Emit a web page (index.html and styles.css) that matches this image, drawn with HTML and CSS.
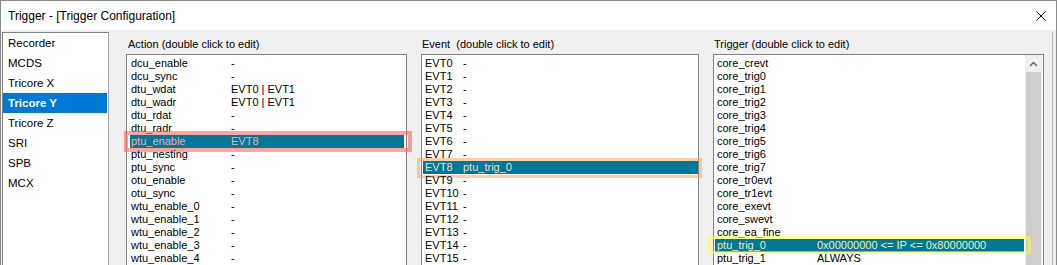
FILE: index.html
```html
<!DOCTYPE html>
<html lang="en">
<head>
  <meta charset="UTF-8">
  <title>Trigger - [Trigger Configuration]</title>
  <link rel="stylesheet" href="styles.css">
</head>
<body>
  <div class="window">
    <div class="titlebar">
      <span class="title">Trigger - [Trigger Configuration]</span>
      <svg class="close" width="10" height="10" viewBox="0 0 10 10">
        <path d="M0.5 0.5 L9.5 9.5 M9.5 0.5 L0.5 9.5" stroke="#000" stroke-width="1" fill="none"/>
      </svg>
    </div>

    <div class="client">
      <!-- core selector -->
      <div class="cores">
        <div class="core">Recorder</div>
        <div class="core">MCDS</div>
        <div class="core">Tricore X</div>
        <div class="core selected">Tricore Y</div>
        <div class="core">Tricore Z</div>
        <div class="core">SRI</div>
        <div class="core">SPB</div>
        <div class="core">MCX</div>
      </div>

      <!-- action -->
      <div class="panel action">
        <div class="label">Action (double click to edit)</div>
        <div class="box">
          <div class="rows">
            <div class="row"><span class="name">dcu_enable</span><span>-</span></div>
            <div class="row"><span class="name">dcu_sync</span><span>-</span></div>
            <div class="row"><span class="name">dtu_wdat</span><span>EVT0 | EVT1</span></div>
            <div class="row"><span class="name">dtu_wadr</span><span>EVT0 | EVT1</span></div>
            <div class="row"><span class="name">dtu_rdat</span><span>-</span></div>
            <div class="row"><span class="name">dtu_radr</span><span>-</span></div>
            <div class="row sel pink"><span class="name">ptu_enable</span><span>EVT8</span></div>
            <div class="row"><span class="name">ptu_nesting</span><span>-</span></div>
            <div class="row"><span class="name">ptu_sync</span><span>-</span></div>
            <div class="row"><span class="name">otu_enable</span><span>-</span></div>
            <div class="row"><span class="name">otu_sync</span><span>-</span></div>
            <div class="row"><span class="name">wtu_enable_0</span><span>-</span></div>
            <div class="row"><span class="name">wtu_enable_1</span><span>-</span></div>
            <div class="row"><span class="name">wtu_enable_2</span><span>-</span></div>
            <div class="row"><span class="name">wtu_enable_3</span><span>-</span></div>
            <div class="row"><span class="name">wtu_enable_4</span><span>-</span></div>
          </div>
        </div>
      </div>

      <!-- event -->
      <div class="panel event">
        <div class="label">Event  (double click to edit)</div>
        <div class="box">
          <div class="rows">
            <div class="row"><span class="name">EVT0</span><span>-</span></div>
            <div class="row"><span class="name">EVT1</span><span>-</span></div>
            <div class="row"><span class="name">EVT2</span><span>-</span></div>
            <div class="row"><span class="name">EVT3</span><span>-</span></div>
            <div class="row"><span class="name">EVT4</span><span>-</span></div>
            <div class="row"><span class="name">EVT5</span><span>-</span></div>
            <div class="row"><span class="name">EVT6</span><span>-</span></div>
            <div class="row"><span class="name">EVT7</span><span>-</span></div>
            <div class="row sel orange"><span class="name">EVT8</span><span>ptu_trig_0</span></div>
            <div class="row"><span class="name">EVT9</span><span>-</span></div>
            <div class="row"><span class="name">EVT10</span><span>-</span></div>
            <div class="row"><span class="name">EVT11</span><span>-</span></div>
            <div class="row"><span class="name">EVT12</span><span>-</span></div>
            <div class="row"><span class="name">EVT13</span><span>-</span></div>
            <div class="row"><span class="name">EVT14</span><span>-</span></div>
            <div class="row"><span class="name">EVT15</span><span>-</span></div>
          </div>
        </div>
      </div>

      <!-- trigger -->
      <div class="panel trigger">
        <div class="label">Trigger (double click to edit)</div>
        <div class="box">
          <div class="rows">
            <div class="row"><span class="name">core_crevt</span><span></span></div>
            <div class="row"><span class="name">core_trig0</span><span></span></div>
            <div class="row"><span class="name">core_trig1</span><span></span></div>
            <div class="row"><span class="name">core_trig2</span><span></span></div>
            <div class="row"><span class="name">core_trig3</span><span></span></div>
            <div class="row"><span class="name">core_trig4</span><span></span></div>
            <div class="row"><span class="name">core_trig5</span><span></span></div>
            <div class="row"><span class="name">core_trig6</span><span></span></div>
            <div class="row"><span class="name">core_trig7</span><span></span></div>
            <div class="row"><span class="name">core_tr0evt</span><span></span></div>
            <div class="row"><span class="name">core_tr1evt</span><span></span></div>
            <div class="row"><span class="name">core_exevt</span><span></span></div>
            <div class="row"><span class="name">core_swevt</span><span></span></div>
            <div class="row"><span class="name">core_ea_fine</span><span></span></div>
            <div class="row sel yellow"><span class="name">ptu_trig_0</span><span>0x00000000 &lt;= IP &lt;= 0x80000000</span></div>
            <div class="row"><span class="name">ptu_trig_1</span><span>ALWAYS</span></div>
          </div>
          <div class="scrollbar">
            <div class="arrow">
              <svg width="9" height="6" viewBox="0 0 9 6">
                <path d="M1 5 L4.5 1.5 L8 5" stroke="#606060" stroke-width="1.3" fill="none"/>
              </svg>
            </div>
            <div class="thumb"></div>
          </div>
        </div>
      </div>

      <div class="edge"></div>
    </div>
  </div>
</body>
</html>
```

FILE: styles.css
```css
body {
  margin: 0;
  overflow: hidden;
  font-family: "Liberation Sans", Arial, sans-serif;
  color: #000;
}

.window {
  width: 1055px;
  height: 264px;
  border: 1px solid #8a8a8a;
  border-bottom: none;
  background: #f0f0f0;
  overflow: hidden;
}

/* title */
.titlebar {
  height: 29px;
  background: #fff;
  display: flex;
  align-items: center;
  justify-content: space-between;
  padding: 0 10px 0 7px;
}

.title {
  font-size: 12px;
}

.close {
  margin-top: 1px;
}

/* client area */
.client {
  display: flex;
  align-items: flex-start;
  padding: 2px 0 0 1px;
}

.cores {
  width: 104px;
  height: 240px;
  background: #fff;
  border: 1px solid #828282;
  border-right-color: #a8a8a8;
  padding: 0 1px 0 0;
  font-size: 11.5px;
}

.core {
  height: 20px;
  line-height: 20px;
  padding-left: 5px;
}

.core.selected {
  background: #0078d7;
  color: #fff;
  font-weight: bold;
}

.panel {
  font-size: 11px;
}

.action { margin-left: 17px; width: 281px; }
.event { margin-left: 14px; width: 278px; }
.trigger { margin-left: 14px; width: 331px; }

.label {
  height: 16px;
  padding-top: 6px;
  padding-left: 1px;
  white-space: pre;
}

.action .label { padding-left: 2px; }

.box {
  height: 220px;
  background: #fff;
  border: 1px solid #828282;
  display: flex;
}

.rows {
  flex: 1;
  padding: 2px 2px 0 3px;
}

.event .rows { padding-left: 1px; padding-right: 0; }
.trigger .rows { padding-left: 1px; padding-right: 1px; }

.row {
  position: relative;
  display: flex;
  height: 13px;
  line-height: 13px;
  padding-left: 1px;
  white-space: pre;
}

.action .name, .trigger .name { width: 100px; }
.event .name { width: 38px; }
.event .row { padding-left: 2px; }
.trigger .row { padding-left: 2px; }

.row.sel {
  background: #00789a;
}

.row.sel::after {
  content: '';
  position: absolute;
  box-sizing: border-box;
}

.pink { color: #f4aaa2; }
.pink::after {
  top: -4px; bottom: -4px; left: -6px; right: -8px;
  border: 4px solid rgba(255, 100, 100, 0.6);
}

.orange { color: #f4dcc2; }
.orange::after {
  top: -3px; bottom: -4px; left: -6px; right: -4px;
  border: 3px solid rgba(255, 160, 70, 0.5);
}

.yellow { color: #eeeebc; }
.yellow::after {
  top: -3px; bottom: -2px; left: -7px; right: -7px;
  border: 3px solid rgba(255, 255, 60, 0.55);
}

/* scrollbar */
.scrollbar {
  width: 17px;
  background: #f0f0f0;
  margin-right: 1px;
  display: flex;
  flex-direction: column;
}

.arrow {
  height: 17px;
  display: flex;
  align-items: center;
  justify-content: center;
}

.thumb {
  flex: 1;
  margin: 0 1px;
  background: #cdcdcd;
}

.edge {
  margin-left: 8px;
  width: 1px;
  height: 240px;
  background: #b8b8b8;
}
```
